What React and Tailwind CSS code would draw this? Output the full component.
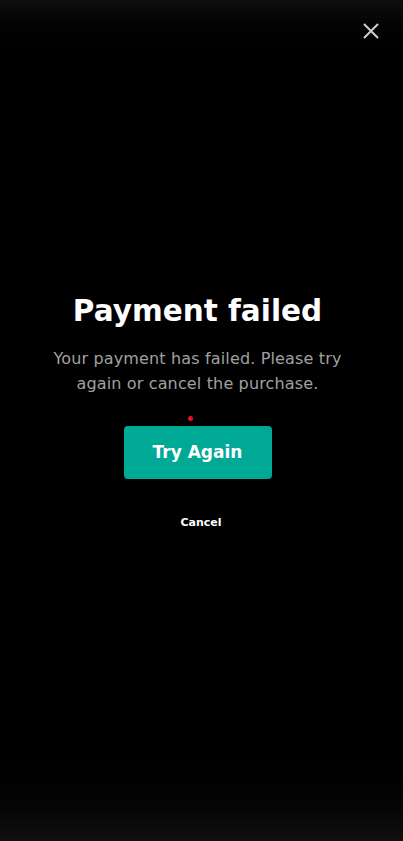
import React from "react";

const CloseIcon = () => (
  <svg width="18" height="18" viewBox="0 0 18 18" fill="none">
    <path d="M2 2L16 16M16 2L2 16" stroke="#cfcfcf" strokeWidth="2" strokeLinecap="butt" />
  </svg>
);

export default function App() {
  return (
    <div
      className="relative h-[841px] w-full overflow-hidden bg-black text-white"
      style={{ fontFamily: '"DejaVu Sans", "Noto Sans", sans-serif' }}
    >
      {/* top and bottom shading */}
      <div className="absolute left-0 right-0 top-0 h-[70px] bg-gradient-to-b from-[#0e0e0e] to-black" />
      <div className="absolute left-0 right-0 bottom-0 h-[110px] bg-gradient-to-t from-[#101010] to-black" />

      <button className="absolute right-[23px] top-[22px] p-0">
        <CloseIcon />
      </button>

      <div className="relative flex h-full flex-col items-center justify-center pb-[19px] pl-4 pr-[24px] text-center">
        <h1 className="text-[29.5px] font-bold leading-[40px]">Payment failed</h1>
        <p className="mt-[15px] text-[16px] leading-[25px] tracking-[0.15px] text-[#a0a0a0]">
          Your payment has failed. Please try
          <br />
          again or cancel the purchase.
        </p>
        <div className="mt-[20px] mb-[5px] ml-[-14px] h-[5px] w-[5px] rounded-full bg-[#e0141e]" />
        <button className="h-[53px] w-[148px] rounded-[4px] bg-[#00a896] text-[17px] font-bold text-white">
          Try Again
        </button>
        <button className="mt-[36px] ml-[7px] text-[11px] font-bold text-white">Cancel</button>
      </div>
    </div>
  );
}
